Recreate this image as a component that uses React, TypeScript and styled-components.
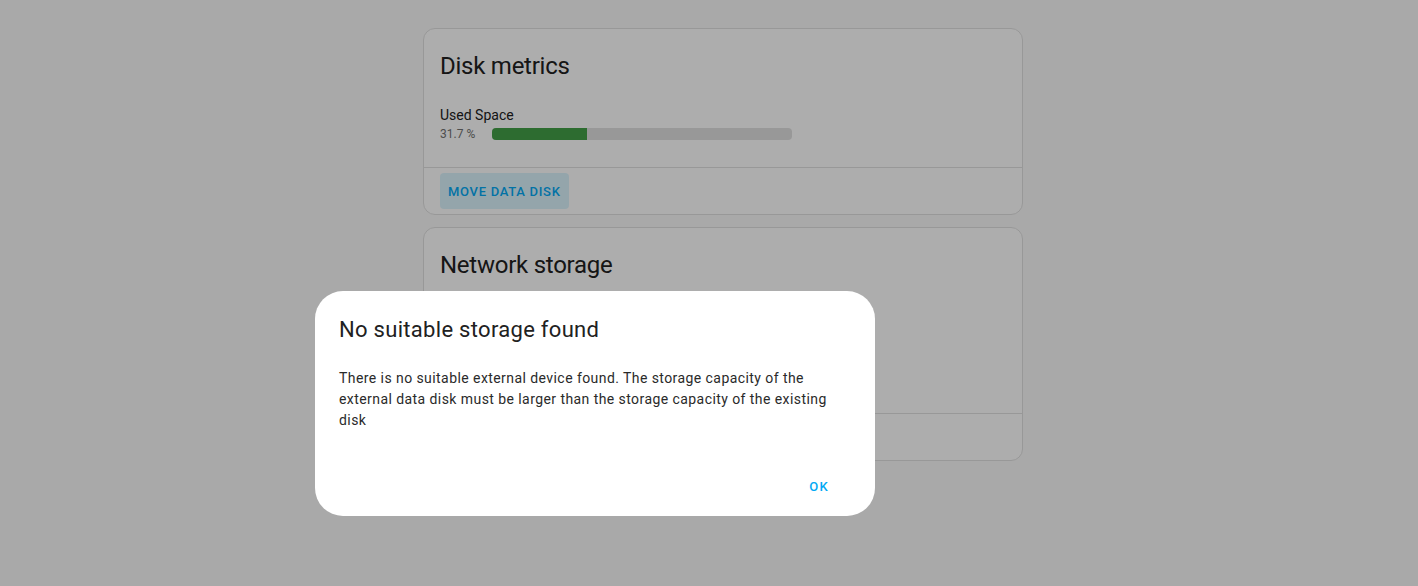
import styled, { createGlobalStyle } from "styled-components";

const GlobalStyle = createGlobalStyle`
  html, body {
    margin: 0;
    padding: 0;
    background: #fafafa;
    font-family: Roboto, "Noto Sans", sans-serif;
    -webkit-font-smoothing: antialiased;
  }
`;

const usedPercent = 31.7;

export default function App() {
  return (
    <>
      <GlobalStyle />
      <Page>
        <Column>
          <Card>
            <CardHeader>Disk metrics</CardHeader>
            <CardContent>
              <MetricLabel>Used Space</MetricLabel>
              <MetricRow>
                <MetricValue>{usedPercent} %</MetricValue>
                <ProgressTrack>
                  <ProgressFill style={{ width: `${usedPercent}%` }} />
                </ProgressTrack>
              </MetricRow>
            </CardContent>
            <CardActions>
              <ActionButton $tinted>Move data disk</ActionButton>
            </CardActions>
          </Card>

          <Card>
            <CardHeader>Network storage</CardHeader>
            <CardContent $tall />
            <CardActions $empty />
          </Card>
        </Column>
      </Page>

      <Scrim />
      <Dialog role="alertdialog">
        <DialogTitle>No suitable storage found</DialogTitle>
        <DialogBody>
          There is no suitable external device found. The storage capacity of
          the external data disk must be larger than the storage capacity of the
          existing disk
        </DialogBody>
        <DialogActions>
          <TextButton>OK</TextButton>
        </DialogActions>
      </Dialog>
    </>
  );
}

const Page = styled.div`
  min-height: 100vh;
  box-sizing: border-box;
  padding: 28px 0 28px 28px;
  display: flex;
  justify-content: center;
`;

const Column = styled.div`
  width: 600px;
  display: flex;
  flex-direction: column;
  gap: 12px;
`;

const Card = styled.div`
  background: #ffffff;
  border: 1px solid #e0e0e0;
  border-radius: 12px;
  overflow: hidden;
`;

const CardHeader = styled.div`
  padding: 21px 16px 0;
  font-size: 24px;
  line-height: 32px;
  letter-spacing: -0.25px;
  color: #212121;
`;

const CardContent = styled.div<{ $tall?: boolean }>`
  padding: 23px 16px 23px;
  min-height: ${(p) => (p.$tall ? "132px" : "0")};
  box-sizing: border-box;
`;

const MetricLabel = styled.div`
  font-size: 14px;
  line-height: 20px;
  color: #212121;
`;

const MetricRow = styled.div`
  display: flex;
  align-items: center;
  gap: 16px;
  margin-top: -1px;
`;

const MetricValue = styled.div`
  font-size: 12px;
  line-height: 20px;
  color: #727272;
  width: 36px;
`;

const ProgressTrack = styled.div`
  width: 300px;
  height: 12px;
  border-radius: 4px;
  background: #e0e0e0;
  overflow: hidden;
`;

const ProgressFill = styled.div`
  height: 100%;
  background: #43a047;
`;

const CardActions = styled.div<{ $empty?: boolean }>`
  border-top: 1px solid #e0e0e0;
  padding: 5px 16px;
  min-height: ${(p) => (p.$empty ? "36px" : "0")};
  display: flex;
`;

const ActionButton = styled.button<{ $tinted?: boolean }>`
  height: 36px;
  padding: 0 8px;
  border: none;
  border-radius: 4px;
  background: ${(p) => (p.$tinted ? "rgba(3, 169, 244, 0.14)" : "transparent")};
  color: #03a9f4;
  font-family: Roboto, sans-serif;
  font-size: 13px;
  font-weight: 500;
  letter-spacing: 0.7px;
  text-transform: uppercase;
`;

const Scrim = styled.div`
  position: fixed;
  inset: 0;
  background: rgba(0, 0, 0, 0.32);
`;

const Dialog = styled.div`
  position: fixed;
  left: 315px;
  top: 291px;
  width: 560px;
  height: 225px;
  box-sizing: border-box;
  background: #ffffff;
  border-radius: 28px;
  padding: 25px 24px 0;
  display: flex;
  flex-direction: column;
`;

const DialogTitle = styled.h2`
  margin: 0;
  font-size: 22px;
  font-weight: 400;
  line-height: 28px;
  letter-spacing: 0.3px;
  color: #212121;
`;

const DialogBody = styled.p`
  margin: 24px 0 0;
  font-size: 14px;
  line-height: 21px;
  letter-spacing: 0.43px;
  color: #2a2a2a;
`;

const DialogActions = styled.div`
  margin-top: auto;
  display: flex;
  justify-content: flex-end;
  padding: 0 14px 12px 0;
`;

const TextButton = styled.button`
  height: 36px;
  padding: 0 8px;
  border: none;
  background: transparent;
  color: #03a9f4;
  font-family: Roboto, sans-serif;
  font-size: 13px;
  font-weight: 500;
  letter-spacing: 1.25px;
`;
